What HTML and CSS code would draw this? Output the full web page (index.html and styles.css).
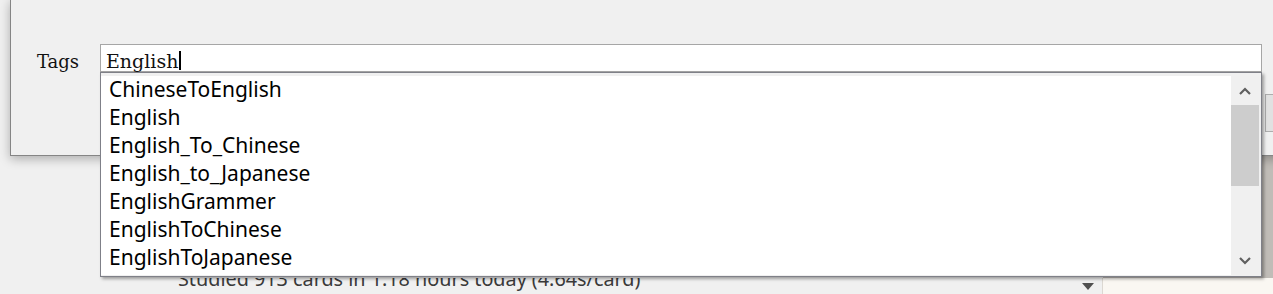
FILE: index.html
```html
<!DOCTYPE html>
<html>
<head>
<meta charset="utf-8">
<link rel="stylesheet" href="styles.css">
</head>
<body>
<div class="desktop">
  <div class="main">
    <div class="main-top">
      <div class="main-left"></div>
      <div class="main-right"></div>
    </div>
    <div class="main-bottom">
      <div class="stats">
        <span class="stats-text">Studied 913 cards in 1.18 hours today (4.64s/card)</span>
        <span class="stats-arrow"></span>
      </div>
      <div class="stats-side"></div>
    </div>
  </div>

  <div class="dialog">
    <div class="field-row">
      <label class="field-label">Tags</label>
      <div class="field-input"><span class="field-value">English</span><span class="caret"></span></div>
    </div>
    <div class="button-row">
      <div class="btn"></div>
    </div>
  </div>

  <div class="popup">
    <ul class="options">
      <li>ChineseToEnglish</li>
      <li>English</li>
      <li>English_To_Chinese</li>
      <li>English_to_Japanese</li>
      <li>EnglishGrammer</li>
      <li>EnglishToChinese</li>
      <li>EnglishToJapanese</li>
    </ul>
    <div class="scrollbar">
      <div class="sb-btn">
        <svg width="12" height="8" viewBox="0 0 12 8"><path d="M1 7 L6 2 L11 7" fill="none" stroke="#606060" stroke-width="2.2"/></svg>
      </div>
      <div class="sb-track">
        <div class="sb-thumb"></div>
      </div>
      <div class="sb-btn">
        <svg width="12" height="8" viewBox="0 0 12 8"><path d="M1 1 L6 6 L11 1" fill="none" stroke="#606060" stroke-width="2.2"/></svg>
      </div>
    </div>
  </div>
</div>
</body>
</html>
```
FILE: styles.css
```css
html, body {
  margin: 0;
  padding: 0;
  background: #f0f0f0;
}
.desktop {
  position: relative;
  width: 1273px;
  height: 294px;
  overflow: hidden;
  font-family: "Noto Sans", "Open Sans", sans-serif;
}
.main {
  display: flex;
  flex-direction: column;
  height: 294px;
}
.main-top {
  flex: 1;
  display: flex;
}
.main-left {
  flex: 1;
  background: #f0f0f0;
}
.main-right {
  width: 170px;
  background: #c0bcb7;
}
.main-bottom {
  height: 16px;
  display: flex;
}
.stats {
  width: 1103px;
  background: #f0f0f0;
  border-right: 1px solid #dcd8d2;
  box-sizing: border-box;
  position: relative;
  overflow: hidden;
}
.stats-text {
  position: absolute;
  left: 178px;
  top: -11px;
  font-size: 19.8px;
  line-height: 24px;
  color: #3a3a3a;
  white-space: nowrap;
}
.stats-arrow {
  position: absolute;
  left: 1082px;
  top: 5px;
  width: 0;
  height: 0;
  border-left: 6px solid transparent;
  border-right: 6px solid transparent;
  border-top: 7px solid #505050;
}
.stats-side {
  flex: 1;
  background: #faf7f2;
}

.dialog {
  position: absolute;
  left: 10px;
  top: -1px;
  width: 1300px;
  height: 157px;
  box-sizing: border-box;
  border: 1px solid #858585;
  background: #f0f0f0;
  box-shadow: 0 3px 10px rgba(0, 0, 0, 0.28);
}
.field-row {
  display: flex;
  align-items: center;
  margin-top: 44px;
  height: 28px;
}
.field-label {
  width: 63px;
  padding-left: 26px;
  padding-top: 6px;
  font-family: "DejaVu Serif", serif;
  font-size: 18px;
  color: #111;
}
.field-input {
  width: 1162px;
  height: 28px;
  box-sizing: border-box;
  border: 1px solid #a6a6a6;
  background: #fff;
  display: flex;
  align-items: center;
  padding-left: 5px;
  padding-top: 6px;
}
.field-value {
  font-family: "DejaVu Serif", serif;
  font-size: 19px;
  color: #111;
}
.caret {
  width: 2px;
  height: 19px;
  background: #000;
  margin-left: 1px;
  margin-top: -1px;
}
.button-row {
  display: flex;
  margin-top: 22px;
  padding-left: 1254px;
}
.btn {
  width: 80px;
  height: 38px;
  box-sizing: border-box;
  border: 1px solid #adadad;
  background: #e1e1e1;
}

.popup {
  position: absolute;
  left: 100px;
  top: 72px;
  width: 1162px;
  height: 205px;
  box-sizing: border-box;
  border: 1px solid #7f8088;
  background: #f0f0f0;
  padding: 3px 2px 1px 0;
  display: flex;
  box-shadow: 2px 2px 3px rgba(0, 0, 0, 0.35);
}
.options {
  list-style: none;
  margin: 0;
  padding: 0;
  flex: 1;
  background: #fff;
}
.options li {
  height: 28px;
  line-height: 27px;
  padding-left: 8px;
  font-size: 21px;
  color: #000;
  white-space: nowrap;
}
.scrollbar {
  width: 28px;
  display: flex;
  flex-direction: column;
  background: #f0f0f0;
}
.sb-btn {
  height: 29px;
  display: flex;
  align-items: center;
  justify-content: center;
}
.sb-track {
  flex: 1;
}
.sb-thumb {
  height: 81px;
  background: #cdcdcd;
}
```
